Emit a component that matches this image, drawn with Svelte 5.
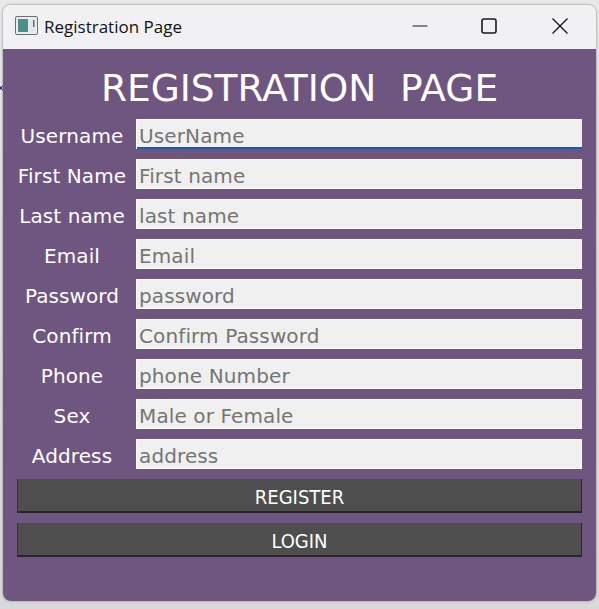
<script>
  const rows = [
    ['Username', 'UserName'],
    ['First Name', 'First name'],
    ['Last name', 'last name'],
    ['Email', 'Email'],
    ['Password', 'password'],
    ['Confirm', 'Confirm Password'],
    ['Phone', 'phone Number'],
    ['Sex', 'Male or Female'],
    ['Address', 'address']
  ];
</script>

<div class="screen">
  <svg class="stray" width="3" height="6" viewBox="0 0 3 6"><path d="M-1 0.5L3 5.5M3 0.5L-1 5.5" stroke="#14148c" stroke-width="1" /></svg>
  <div class="window">
    <header class="titlebar">
      <svg class="appicon" width="24" height="20" viewBox="0 0 24 20">
        <rect x="0.5" y="0.5" width="22" height="18" rx="1.5" fill="#e8eef0" stroke="#6b6f73" />
        <rect x="3" y="3" width="10" height="13" fill="#4b8f87" />
        <rect x="14" y="3" width="6" height="13" fill="#dfe8ea" />
        <rect x="18" y="4" width="1.5" height="7" fill="#5f6f78" />
      </svg>
      <span class="wintitle">Registration Page</span>
      <div class="controls">
        <svg width="16" height="16" viewBox="0 0 16 16"><path d="M0.5 8H15.5" stroke="#1a1a1a" stroke-width="1.2" /></svg>
        <svg width="16" height="16" viewBox="0 0 16 16" class="max"><rect x="1" y="1" width="14" height="14" rx="2" fill="none" stroke="#1a1a1a" stroke-width="1.6" /></svg>
        <svg width="16" height="16" viewBox="0 0 16 16" class="close"><path d="M0.5 0.5L15.5 15.5M15.5 0.5L0.5 15.5" stroke="#1a1a1a" stroke-width="1.4" /></svg>
      </div>
    </header>
    <main class="body">
      <h1>REGISTRATION&nbsp; PAGE</h1>
      <form class="form">
        {#each rows as [label, placeholder], i}
          <div class="row">
            <label for={'f' + i}>{label}</label>
            <input id={'f' + i} class:focus={i === 0} {placeholder} />
          </div>
        {/each}
        <div class="buttons">
          <button type="button">REGISTER</button>
          <button type="button">LOGIN</button>
        </div>
      </form>
    </main>
  </div>
</div>

<style>
  :global(body) {
    margin: 0;
    background: #e6e6e6;
  }
  .screen {
    position: relative;
    width: 599px;
    height: 609px;
    padding: 5px 3px 8px;
    box-sizing: border-box;
    overflow: hidden;
    background: linear-gradient(#e9e9e9, #d9d9d9);
  }
  .stray {
    position: absolute;
    z-index: 1;
    left: 0;
    top: 85px;
  }
  .window {
    position: relative;
    height: 100%;
    display: flex;
    flex-direction: column;
    border-radius: 8px;
    overflow: hidden;
    box-shadow: 0 0 2px 1px #b5b5b5;
  }
  .titlebar {
    height: 44px;
    flex: none;
    display: flex;
    align-items: center;
    background: #f1f1f3;
    padding-left: 12px;
    box-sizing: border-box;
    font: 17px "Open Sans", sans-serif;
    color: #111;
  }
  .appicon {
    margin-right: 5px;
    margin-top: -2px;
  }
  .wintitle {
    margin-top: -1px;
  }
  .controls {
    margin-left: auto;
    display: flex;
    padding-right: 28px;
    margin-top: -2px;
  }
  .max {
    margin-left: 53px;
  }
  .close {
    margin-left: 55px;
  }
  .body {
    flex: 1;
    background: #6f5680;
    padding: 0 14px;
  }
  h1 {
    margin: 15px 0 0;
    height: 55px;
    text-align: center;
    font: 400 37.5px/48px "DejaVu Sans", sans-serif;
    color: #fff;
  }
  .form {
    display: flex;
    flex-direction: column;
    gap: 10px;
  }
  .row {
    display: flex;
    gap: 9px;
    height: 30px;
  }
  label {
    width: 110px;
    text-align: center;
    font: 20px/34px "DejaVu Sans", sans-serif;
    letter-spacing: 0.1px;
    color: #fff;
  }
  input {
    flex: 1;
    min-width: 0;
    height: 30px;
    box-sizing: border-box;
    border: none;
    border-radius: 0;
    outline: none;
    padding: 4px 3px 0;
    background: #f0f0f0;
    box-shadow: inset 1px 1px 0 #fff, inset -1px -1px 0 #fff;
    font: 20px "DejaVu Sans", sans-serif;
    letter-spacing: 0.12px;
    color: #000;
  }
  input::placeholder {
    color: #757575;
    opacity: 1;
  }
  input.focus {
    box-shadow: inset 1px 1px 0 #fff, inset 0 -2px 0 #1a5aa8;
  }
  .buttons {
    display: flex;
    flex-direction: column;
    gap: 10px;
  }
  button {
    height: 34px;
    border: none;
    border-right: 1px solid #2a1f33;
    border-bottom: 2px solid #2a1f33;
    border-left: 1px solid #3a3040;
    background: #4e4e4e;
    padding: 3px 0 0;
    color: #fff;
    font: 20px "DejaVu Sans Condensed", "DejaVu Sans", sans-serif;
  }
</style>
